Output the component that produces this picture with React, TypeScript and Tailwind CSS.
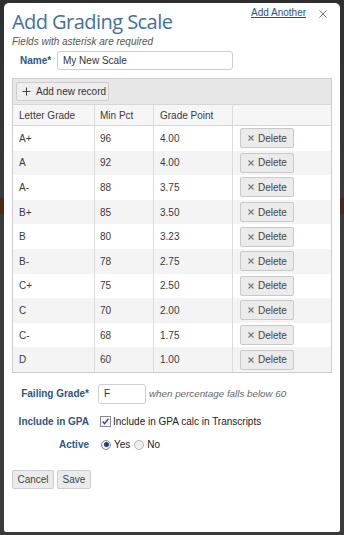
import React from "react";

type Row = { grade: string; min: string; point: string };

const rows: Row[] = [
  { grade: "A+", min: "96", point: "4.00" },
  { grade: "A", min: "92", point: "4.00" },
  { grade: "A-", min: "88", point: "3.75" },
  { grade: "B+", min: "85", point: "3.50" },
  { grade: "B", min: "80", point: "3.23" },
  { grade: "B-", min: "78", point: "2.75" },
  { grade: "C+", min: "75", point: "2.50" },
  { grade: "C", min: "70", point: "2.00" },
  { grade: "C-", min: "68", point: "1.75" },
  { grade: "D", min: "60", point: "1.00" },
];

function SmallX({ className }: { className?: string }) {
  return (
    <svg viewBox="0 0 8 8" className={className} fill="none" stroke="currentColor" strokeWidth="1.1">
      <path d="M1.5 1.5 L6.5 6.5 M6.5 1.5 L1.5 6.5" />
    </svg>
  );
}

function GradeRow({ row, index }: { row: Row; index: number }) {
  const striped = index % 2 === 1;
  return (
    <div className={`flex h-[24.6px] items-center ${striped ? "bg-[#f4f4f4]" : "bg-white"}`}>
      <div className="flex h-full w-[82px] items-center border-r border-[#dcdcdc] pl-[6px]">{row.grade}</div>
      <div className="flex h-full w-[59px] items-center border-r border-[#dcdcdc] pl-[5px]">{row.min}</div>
      <div className="flex h-full w-[79px] items-center border-r border-[#dcdcdc] pl-[6px]">{row.point}</div>
      <div className="flex h-full flex-1 items-center pl-[7px]">
        <button
          type="button"
          className="flex h-[20px] w-[54px] items-center gap-[3px] rounded-[2px] border border-[#c9c9c9] bg-[#ebebeb] pl-[6px] text-[#444]"
        >
          <SmallX className="h-[8px] w-[8px] text-[#777]" />
          <span>Delete</span>
        </button>
      </div>
    </div>
  );
}

export default function App() {
  return (
    <div className="h-[535px] w-[344px] overflow-hidden bg-[linear-gradient(to_bottom,#2f2f2f_0px,#3a3a3a_198px,#4a2a14_198px,#4a2a14_214px,#3a3a3a_214px,#3a3a3a_100%)] pl-[4px] pt-[3px] font-['Liberation_Sans',Arial,sans-serif] text-[10px] text-[#3a3a3a]">
      <div className="relative h-[529px] w-[336px] rounded-t-[5px] rounded-b-[2px] bg-white px-[8px]">
        {/* top-right actions */}
        <a href="#" className="absolute left-[247px] top-[4px] text-[10px] leading-[12px] text-[#1e4f9f] underline">
          Add Another
        </a>
        <svg viewBox="0 0 8 8" className="absolute left-[315px] top-[7px] h-[8px] w-[8px] text-[#777]" fill="none" stroke="currentColor" strokeWidth="1">
          <path d="M0.5 0.5 L7.5 7.5 M7.5 0.5 L0.5 7.5" />
        </svg>

        <h1 className="pt-[6px] font-['Open_Sans',sans-serif] text-[20px] leading-[26px] font-normal tracking-[-0.55px] text-[#3d6fae]">
          Add Grading Scale
        </h1>
        <p className="mt-[1px] text-[10px] leading-[12px] italic text-[#555]">Fields with asterisk are required</p>

        <div className="mt-[3px] flex h-[19px] items-center">
          <label className="w-[45px] pl-[8px] font-bold text-[#2c5689]">Name*</label>
          <input
            readOnly
            value="My New Scale"
            className="h-[19px] w-[176px] rounded-[3px] border border-[#cfcfcf] bg-white px-[5px] text-[10px] text-[#333] outline-none"
          />
        </div>

        {/* grading table */}
        <div className="mt-[8px] border border-[#cdcdcd]">
          <div className="flex h-[25px] items-center bg-[#e7e7e7] pl-[3px]">
            <button
              type="button"
              className="flex h-[19px] w-[93px] items-center gap-[5px] rounded-[2px] border border-[#cdcdcd] bg-[#eeeeee] pl-[5px] text-[10px] text-[#333]"
            >
              <svg viewBox="0 0 9 9" className="h-[9px] w-[9px] text-[#444]" fill="none" stroke="currentColor" strokeWidth="1.1">
                <path d="M4.5 0.5 V8.5 M0.5 4.5 H8.5" />
              </svg>
              <span>Add new record</span>
            </button>
          </div>
          <div className="flex h-[22px] items-center border-t border-b border-[#d6d6d6] bg-[#f6f6f6]">
            <div className="flex h-full w-[82px] items-center border-r border-[#dcdcdc] pl-[6px]">Letter Grade</div>
            <div className="flex h-full w-[59px] items-center border-r border-[#dcdcdc] pl-[5px]">Min Pct</div>
            <div className="flex h-full w-[79px] items-center border-r border-[#dcdcdc] pl-[6px]">Grade Point</div>
            <div className="h-full flex-1" />
          </div>
          {rows.map((row, i) => (
            <GradeRow key={row.grade} row={row} index={i} />
          ))}
        </div>

        {/* settings */}
        <div className="mt-[11px] flex h-[20px] items-center">
          <label className="w-[77px] text-right font-bold text-[#2c5689]">Failing Grade*</label>
          <input
            readOnly
            value="F"
            className="ml-[9px] h-[20px] w-[48px] rounded-[3px] border border-[#cfcfcf] bg-white px-[5px] text-[10px] text-[#333] outline-none"
          />
          <span className="ml-[3px] text-[9.8px] italic text-[#666]">when percentage falls below 60</span>
        </div>

        <div className="mt-[9px] flex h-[18px] items-center">
          <label className="w-[77px] text-right font-bold text-[#2c5689]">Include in GPA</label>
          <span className="ml-[11px] flex h-[11px] w-[11px] items-center justify-center border border-[#8a8a8a] bg-[#f4f4f4]">
            <svg viewBox="0 0 10 10" className="h-[9px] w-[9px]" fill="none" stroke="#2b4f8a" strokeWidth="1.6">
              <path d="M1.8 5 L4 7.4 L8.3 2" />
            </svg>
          </span>
          <span className="ml-[2px] text-[10px] text-[#222]">Include in GPA calc in Transcripts</span>
        </div>

        <div className="mt-[5px] flex h-[18px] items-center">
          <label className="w-[77px] text-right font-bold text-[#2c5689]">Active</label>
          <span className="ml-[12px] flex h-[10px] w-[10px] items-center justify-center rounded-full border border-[#8a8a8a] bg-[#eef2f8]">
            <span className="h-[5px] w-[5px] rounded-full bg-[#1f3f78]" />
          </span>
          <span className="ml-[3px] text-[10px] text-[#222]">Yes</span>
          <span className="ml-[4px] h-[10px] w-[10px] rounded-full border border-[#b5b5b5] bg-[#efefef]" />
          <span className="ml-[3px] text-[10px] text-[#222]">No</span>
        </div>

        <div className="mt-[16px] flex gap-[3px]">
          <button type="button" className="h-[19px] w-[42px] rounded-[2px] border border-[#cdcdcd] bg-[#ebebeb] text-[10px] text-[#444]">
            Cancel
          </button>
          <button type="button" className="h-[19px] w-[34px] rounded-[2px] border border-[#cdcdcd] bg-[#ebebeb] text-[10px] text-[#444]">
            Save
          </button>
        </div>
      </div>
    </div>
  );
}
